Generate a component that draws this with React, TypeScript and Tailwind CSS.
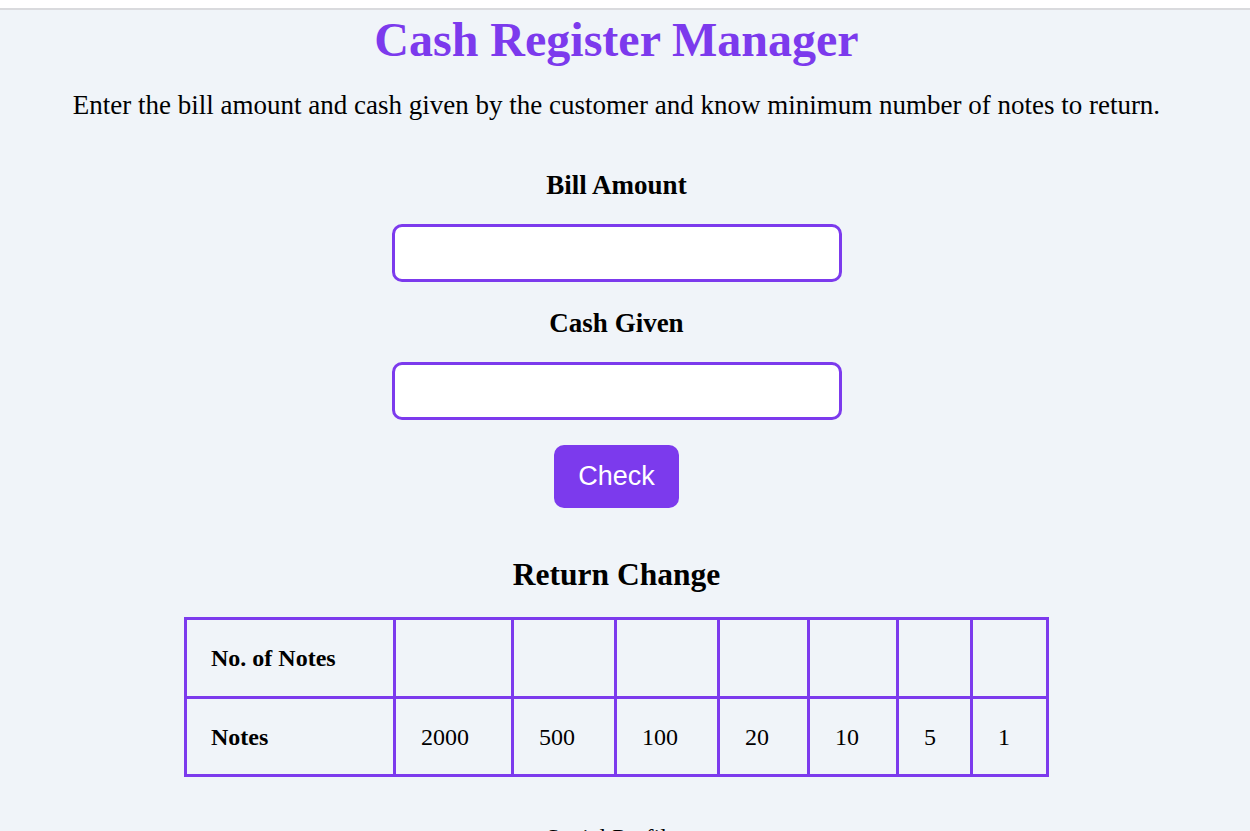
import React from "react";

export default function App() {
  const notes = ["2000", "500", "100", "20", "10", "5", "1"];
  const widths = ["w-[209px]", "w-[118px]", "w-[103px]", "w-[103px]", "w-[90px]", "w-[89px]", "w-[74px]", "w-[76px]"];
  return (
    <div className="min-h-screen bg-[#f0f4f9] text-black font-['Liberation_Serif','Times_New_Roman',serif]">
      <div className="h-[10px] bg-white border-b-2 border-[#d9dadd]" />
      <div className="flex flex-col items-center pr-[17px]">
        <h1 className="mt-[2px] text-[48px] leading-[56px] font-bold text-[#7c3aed]">Cash Register Manager</h1>
        <p className="mt-[22px] text-[27px] leading-[30px] whitespace-nowrap">
          Enter the bill amount and cash given by the customer and know minimum number of notes to return.
        </p>
        <label className="mt-[49px] text-[27px] leading-[32px] font-bold">Bill Amount</label>
        <input className="mt-[23px] w-[450px] h-[58px] bg-white border-[3px] border-[#7c3aed] rounded-[10px] outline-none" />
        <label className="mt-[25px] text-[27px] leading-[32px] font-bold">Cash Given</label>
        <input className="mt-[23px] w-[450px] h-[58px] bg-white border-[3px] border-[#7c3aed] rounded-[10px] outline-none" />
        <button className="mt-[25px] w-[125px] h-[63px] bg-[#7c3aed] text-white rounded-[10px] text-[27px] font-['Liberation_Sans',Arial,sans-serif]">
          Check
        </button>
        <h2 className="mt-[49px] text-[31.5px] leading-[36px] font-bold">Return Change</h2>
        <table className="mt-[24px] table-fixed border-collapse border-[3px] border-[#7c3aed] text-[24px]">
          <colgroup>
            {widths.map((w, i) => (
              <col key={i} className={w} />
            ))}
          </colgroup>
          <tbody>
            <tr className="h-[79px]">
              <th className="border-[3px] border-[#7c3aed] text-left pl-[24px] font-bold">No. of Notes</th>
              {notes.map((n) => (
                <td key={n} className="border-[3px] border-[#7c3aed]"></td>
              ))}
            </tr>
            <tr className="h-[78px]">
              <th className="border-[3px] border-[#7c3aed] text-left pl-[24px] font-bold">Notes</th>
              {notes.map((n) => (
                <td key={n} className="border-[3px] border-[#7c3aed] text-left pl-[25px]">
                  {n}
                </td>
              ))}
            </tr>
          </tbody>
        </table>
        <footer className="mt-[46px] text-[24px] leading-[28px]">Social Profiles</footer>
      </div>
    </div>
  );
}
